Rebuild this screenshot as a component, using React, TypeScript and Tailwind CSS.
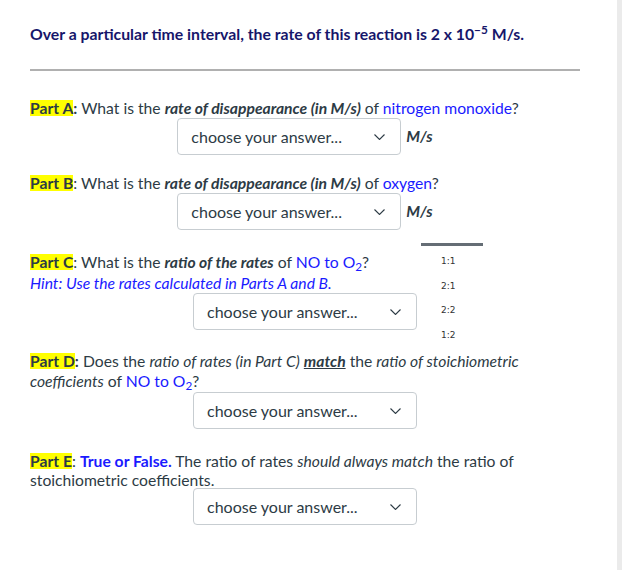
import React from "react";

const Chevron = () => (
  <svg width="11" height="6" viewBox="0 0 11 6" fill="none" className="shrink-0">
    <path d="M0.5 0.5 L5.5 5.5 L10.5 0.5" stroke="#2d3b45" strokeWidth="1.1" />
  </svg>
);

const Select = () => (
  <div className="w-[224px] h-[37px] flex items-center justify-between pl-[13px] pr-[15px] border border-[#c7cdd1] rounded-[4px] bg-white text-[16px] text-[#2d3b45]">
    <span>choose your answer...</span>
    <Chevron />
  </div>
);

const Tag = ({ children }: { children: React.ReactNode }) => (
  <span className="inline-block bg-[#ffff00] font-bold leading-[16px]">{children}</span>
);

const Blue = ({ children }: { children: React.ReactNode }) => (
  <span className="text-[#1a1aff]">{children}</span>
);

const O2 = () => (
  <Blue>
    NO to O<sub>2</sub>
  </Blue>
);

export default function App() {
  return (
    <div
      className="relative w-[622px] h-[570px] bg-white flex overflow-hidden"
      style={{ fontFamily: "Lato, 'Open Sans', sans-serif" }}
    >
      <div className="flex-1 pl-[30px]">
        <div className="w-[550px] text-[15.7px] text-[#2d3b45] leading-[19px]">
          <div className="pt-[22px] text-[#16166b] font-bold leading-[24px] text-[15.8px]">
            Over a particular time interval, the rate of this reaction is 2 x 10
            <sup>−5</sup> M/s.
          </div>
          <div className="mt-[23px] h-[2px] bg-[#b0b0b0]" />

          <div className="mt-[28px]">
            <Tag>Part A</Tag>
            <span className="font-bold">:</span> What is the{" "}
            <b className="italic">rate of disappearance (in M/s)</b> of <Blue>nitrogen monoxide</Blue>?
          </div>
          <div className="flex justify-center items-center gap-[5px]">
            <Select />
            <span className="font-bold italic">M/s</span>
          </div>

          <div className="mt-[19px]">
            <Tag>Part B</Tag>: What is the <b className="italic">rate of disappearance (in M/s)</b> of{" "}
            <Blue>oxygen</Blue>?
          </div>
          <div className="flex justify-center items-center gap-[5px]">
            <Select />
            <span className="font-bold italic">M/s</span>
          </div>

          <div className="mt-[22px] leading-[20px]">
            <Tag>Part C</Tag>: What is the <b className="italic">ratio of the rates</b> of <O2 />?
          </div>
          <div className="mt-[1px] leading-[20px] italic text-[#1a1aff]">
            Hint: Use the rates calculated in Parts A and B.
          </div>
          <div className="flex justify-center">
            <Select />
          </div>

          <div className="mt-[21px] leading-[20px]">
            <Tag>Part D</Tag>
            <span className="font-bold">:</span> Does the <i>ratio of rates (in Part C)</i>{" "}
            <b className="italic underline">match</b> the <i>ratio of stoichiometric coefficients</i> of <O2 />?
          </div>
          <div className="mt-[1px] flex justify-center">
            <Select />
          </div>

          <div className="mt-[23px]">
            <Tag>Part E</Tag>: <b className="text-[#1a1aff]">True or False.</b> The ratio of rates{" "}
            <i>should always match</i> the ratio of stoichiometric coefficients.
          </div>
          <div className="mt-[-2px] flex justify-center">
            <Select />
          </div>
        </div>
      </div>
      <div className="w-[5px] bg-[#ebebeb]" />

      <div className="absolute left-[421px] top-[243px] w-[62px]">
        <div className="h-[3px] bg-[#656d75]" />
        <div
          className="pl-[20px] text-[9px] text-[#333] leading-[24.5px] pt-[3px]"
          style={{ fontFamily: "'DejaVu Sans', sans-serif" }}
        >
          <div>1:1</div>
          <div>2:1</div>
          <div>2:2</div>
          <div>1:2</div>
        </div>
      </div>
    </div>
  );
}
